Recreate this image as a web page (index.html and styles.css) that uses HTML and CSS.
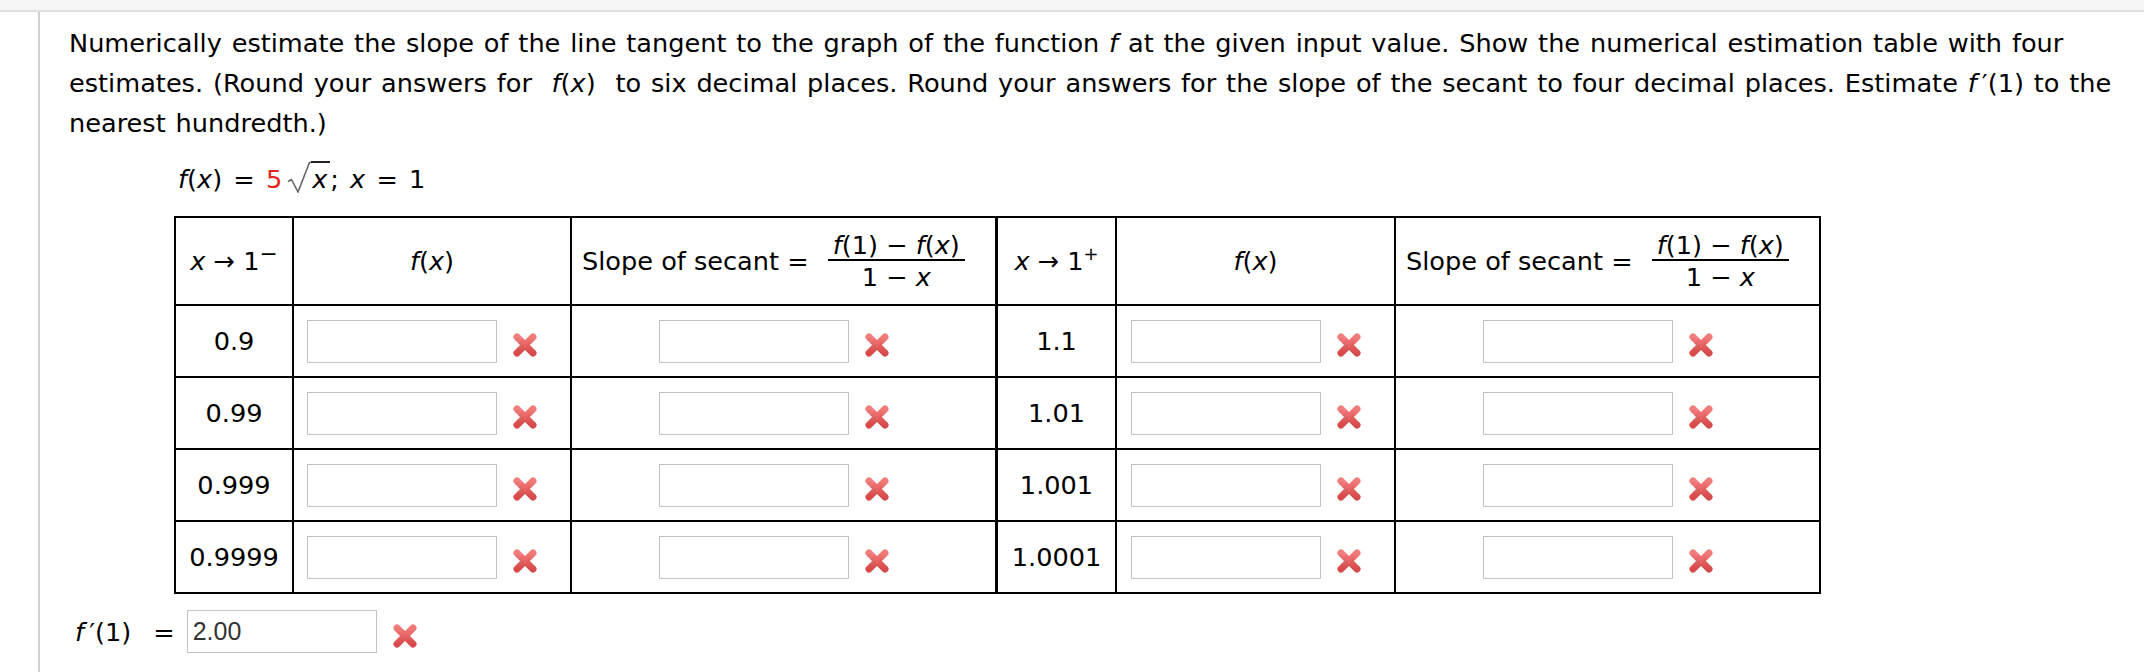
FILE: index.html
```html
<!DOCTYPE html>
<html>
<head>
<meta charset="utf-8">
<link rel="stylesheet" href="styles.css">
</head>
<body>
<svg class="defs" width="0" height="0" aria-hidden="true">
  <defs>
    <linearGradient id="xg" x1="0" y1="0" x2="0" y2="1">
      <stop offset="0" stop-color="#f07c7c"/>
      <stop offset="1" stop-color="#d84a4a"/>
    </linearGradient>
  </defs>
</svg>
<div class="topbar"></div>
<div class="page">
  <p class="prompt">Numerically estimate the slope of the line tangent to the graph of the function <i>f</i> at the given input value. Show the numerical estimation table with four estimates. (Round your answers for&nbsp; <i>f</i>(<i>x</i>)&nbsp; to six decimal places. Round your answers for the slope of the secant to four decimal places. Estimate <i>f</i>&thinsp;′(1) to the nearest hundredth.)</p>
  <div class="given"><i>f</i>(<i>x</i>) = <span class="red">5</span><svg class="radical" viewBox="0 0 24 32"><path d="M1 20.5 L4.5 18.5 L11 31 L22.5 1.5 L24 1.5"/></svg><span class="radicand"><i>x</i></span>; <i>x</i> = 1</div>

  <div class="grid">
    <div class="hd"><span><i>x</i> → 1<sup class="sm">−</sup></span></div>
    <div class="hd"><span><i>f</i>(<i>x</i>)</span></div>
    <div class="hd sec"><span>Slope of secant =</span><span class="frac"><span class="num"><i>f</i>(1) − <i>f</i>(<i>x</i>)</span><span class="den">1 − <i>x</i></span></span></div>
    <div class="hd mid"><span><i>x</i> → 1<sup class="sp">+</sup></span></div>
    <div class="hd"><span><i>f</i>(<i>x</i>)</span></div>
    <div class="hd sec"><span>Slope of secant =</span><span class="frac"><span class="num"><i>f</i>(1) − <i>f</i>(<i>x</i>)</span><span class="den">1 − <i>x</i></span></span></div>

    <div>0.9</div>
    <div class="inp"><input type="text"><svg class="xm" viewBox="0 0 28 28"><path d="M6 6L22 22M22 6L6 22"/></svg></div>
    <div class="inp"><input type="text"><svg class="xm" viewBox="0 0 28 28"><path d="M6 6L22 22M22 6L6 22"/></svg></div>
    <div class="mid">1.1</div>
    <div class="inp"><input type="text"><svg class="xm" viewBox="0 0 28 28"><path d="M6 6L22 22M22 6L6 22"/></svg></div>
    <div class="inp"><input type="text"><svg class="xm" viewBox="0 0 28 28"><path d="M6 6L22 22M22 6L6 22"/></svg></div>

    <div>0.99</div>
    <div class="inp"><input type="text"><svg class="xm" viewBox="0 0 28 28"><path d="M6 6L22 22M22 6L6 22"/></svg></div>
    <div class="inp"><input type="text"><svg class="xm" viewBox="0 0 28 28"><path d="M6 6L22 22M22 6L6 22"/></svg></div>
    <div class="mid">1.01</div>
    <div class="inp"><input type="text"><svg class="xm" viewBox="0 0 28 28"><path d="M6 6L22 22M22 6L6 22"/></svg></div>
    <div class="inp"><input type="text"><svg class="xm" viewBox="0 0 28 28"><path d="M6 6L22 22M22 6L6 22"/></svg></div>

    <div>0.999</div>
    <div class="inp"><input type="text"><svg class="xm" viewBox="0 0 28 28"><path d="M6 6L22 22M22 6L6 22"/></svg></div>
    <div class="inp"><input type="text"><svg class="xm" viewBox="0 0 28 28"><path d="M6 6L22 22M22 6L6 22"/></svg></div>
    <div class="mid">1.001</div>
    <div class="inp"><input type="text"><svg class="xm" viewBox="0 0 28 28"><path d="M6 6L22 22M22 6L6 22"/></svg></div>
    <div class="inp"><input type="text"><svg class="xm" viewBox="0 0 28 28"><path d="M6 6L22 22M22 6L6 22"/></svg></div>

    <div>0.9999</div>
    <div class="inp"><input type="text"><svg class="xm" viewBox="0 0 28 28"><path d="M6 6L22 22M22 6L6 22"/></svg></div>
    <div class="inp"><input type="text"><svg class="xm" viewBox="0 0 28 28"><path d="M6 6L22 22M22 6L6 22"/></svg></div>
    <div class="mid">1.0001</div>
    <div class="inp"><input type="text"><svg class="xm" viewBox="0 0 28 28"><path d="M6 6L22 22M22 6L6 22"/></svg></div>
    <div class="inp"><input type="text"><svg class="xm" viewBox="0 0 28 28"><path d="M6 6L22 22M22 6L6 22"/></svg></div>
  </div>

  <div class="answer">
    <span class="lbl"><i>f</i>&thinsp;′(1)</span>
    <span class="eq">=</span>
    <input type="text" class="ans" value="2.00">
    <svg class="xm" viewBox="0 0 28 28"><path d="M6 6L22 22M22 6L6 22"/></svg>
  </div>
</div>
</body>
</html>
```

FILE: styles.css
```css
html, body {
  margin: 0;
  padding: 0;
  background: #fff;
}
body {
  font-family: "DejaVu Sans", Verdana, sans-serif;
  font-size: 25.6px;
  color: #000;
}
.defs {
  position: absolute;
  width: 0;
  height: 0;
}
.topbar {
  height: 10px;
  background: #f6f6f6;
  border-bottom: 2px solid #e1e1e1;
}
.page {
  margin-left: 38px;
  border-left: 2px solid #d2d2d2;
  padding: 11px 0 0 29px;
  min-height: calc(100vh - 12px);
  box-sizing: border-box;
}
.prompt {
  margin: 0;
  line-height: 40px;
  word-spacing: 1.7px;
}
.given {
  margin-top: 16px;
  padding-left: 109px;
  line-height: 40px;
  word-spacing: 3px;
}
.red {
  color: #e3231c;
}
.radical {
  display: inline-block;
  width: 24px;
  height: 32px;
  vertical-align: -5px;
  margin-left: 5px;
}
.radical path {
  fill: none;
  stroke: #666;
  stroke-width: 1.6;
}
.radicand {
  display: inline-block;
  line-height: 28px;
  padding: 2px 3px 0 1px;
  border-top: 2px solid #222;
}

.grid {
  margin: 17px 0 0 105px;
  display: grid;
  width: max-content;
  grid-template-columns: 116px 276px 423px 118px 277px 423px;
  grid-template-rows: 86px repeat(4, 70px);
  gap: 2px;
  padding: 2px;
  background: #000;
}
.grid > div {
  background: #fff;
  display: flex;
  align-items: center;
  justify-content: center;
  box-sizing: border-box;
}
.grid > .mid {
  border-left: 1px solid #000;
}
.grid > .sec {
  justify-content: flex-start;
  padding-left: 10px;
}
sup {
  line-height: 0;
}
.sm {
  font-size: 0.85em;
  vertical-align: 9px;
}
.sp {
  font-size: 0.7em;
  vertical-align: 10px;
}
.frac {
  display: inline-flex;
  flex-direction: column;
  align-items: center;
  margin-left: 19px;
  line-height: 28px;
}
.num {
  padding: 0 5px;
  border-bottom: 2px solid #000;
}
.den {
  padding-top: 2px;
}

input {
  box-sizing: border-box;
  width: 190px;
  height: 43px;
  border: 1px solid #c2c2c2;
  background: #fff;
  margin: 0;
  outline: none;
  font-family: "Liberation Sans", Arial, sans-serif;
  font-size: 25px;
  color: #333;
  padding: 0 5px;
}
.xm {
  width: 28px;
  height: 28px;
  margin-left: 14px;
  margin-top: 8px;
  flex: none;
}
.xm path {
  fill: none;
  stroke: url(#xg);
  stroke-width: 7;
  stroke-linecap: round;
}
.inp .xm {
  margin-right: 18px;
}

.answer {
  display: flex;
  align-items: center;
  margin-top: 16px;
  padding-left: 6px;
}
.eq {
  margin-left: 22px;
  margin-right: 12px;
}
```
